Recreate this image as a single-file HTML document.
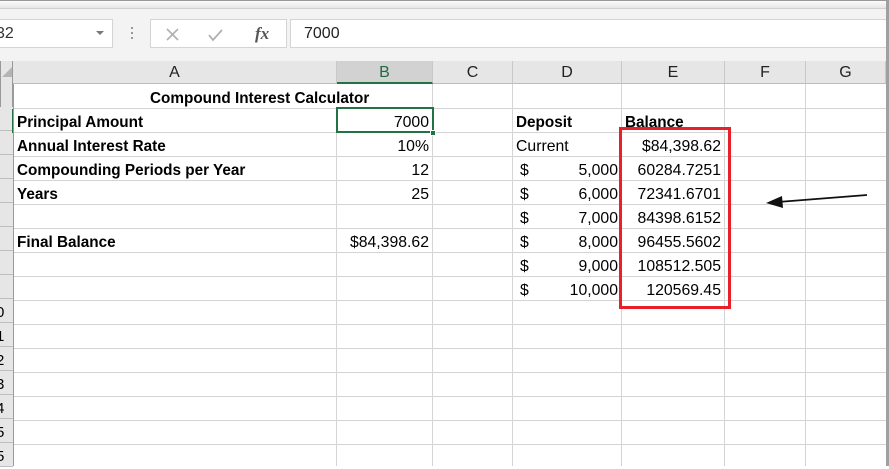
<!DOCTYPE html>
<html><head><meta charset="utf-8"><style>
*{margin:0;padding:0;box-sizing:border-box}
body{width:889px;height:466px;overflow:hidden;background:#fff;position:relative;font-family:"Liberation Sans",Arial,sans-serif;font-size:15.8px;color:#000}
.a{position:absolute}
.t{position:absolute;white-space:nowrap;line-height:25px;height:24px}
.b{font-weight:bold;font-size:15.3px}
.r{text-align:right}
.h{position:absolute;top:61px;height:23px;background:#e6e6e6;border-right:1px solid #c8c8c8;border-bottom:1px solid #bdbdbd;text-align:center;line-height:24px;font-size:16px;color:#222}
</style></head><body>
<div class="a" style="left:0;top:0;width:889px;height:8px;background:linear-gradient(#fff,#e6e6e6)"></div>
<div class="a" style="left:0;top:0;width:889px;height:1px;background:#999"></div>
<div class="a" style="left:0;top:8px;width:889px;height:53px;background:#f3f3f3;border-top:1px solid #d0d0d0"></div>
<div class="a" style="left:0;top:19px;width:113px;height:29px;background:#fff;border:1px solid #d4d4d4;border-left:none"></div>
<div class="t" style="left:-4px;top:21px;font-size:16px;color:#333">32</div>
<div class="a" style="left:96px;top:31px;width:0;height:0;border-left:4px solid transparent;border-right:4px solid transparent;border-top:4px solid #777"></div>
<div class="a" style="left:131px;top:27px;width:2px;height:2px;background:#999;box-shadow:0 5px #999,0 10px #999"></div>
<div class="a" style="left:150px;top:19px;width:137px;height:29px;background:#fff;border:1px solid #d4d4d4"></div>
<svg class="a" style="left:163px;top:25px" width="120" height="18"><path d="M4 4l11 11M15 4L4 15" stroke="#b0b0b0" stroke-width="1.6" fill="none"/><path d="M46 10l4 5 9-10" stroke="#b0b0b0" stroke-width="1.8" fill="none"/><text x="92" y="14" font-family="Liberation Serif" font-style="italic" font-weight="bold" font-size="17" fill="#555">fx</text></svg>
<div class="a" style="left:290px;top:19px;width:599px;height:29px;background:#fff;border:1px solid #d4d4d4"></div>
<div class="t" style="left:304px;top:21px;font-size:16px;color:#222">7000</div>
<div class="a" style="left:0;top:61px;width:13px;height:405px;background:#e6e6e6;border-right:1px solid #9a9a9a"></div>
<div class="a" style="left:0;top:61px;width:1px;height:405px;background:#999"></div>
<div class="a" style="left:2px;top:67px;width:0;height:0;border-left:10px solid transparent;border-bottom:10px solid #b5b5b5"></div>
<div class="h" style="left:13px;width:324px">A</div>
<div class="h" style="left:337px;width:96px;background:#d2d2d2;color:#1f6b3f;border-bottom:2px solid #217346">B</div>
<div class="h" style="left:433px;width:80px">C</div>
<div class="h" style="left:513px;width:109px">D</div>
<div class="h" style="left:622px;width:103px">E</div>
<div class="h" style="left:725px;width:81px">F</div>
<div class="h" style="left:806px;width:80px">G</div>
<div class="a" style="left:886px;top:0;width:3px;height:466px;background:#a0a0a0"></div>
<svg class="a" style="left:14px;top:84px" width="872" height="382">
<g stroke="#d4d4d4" stroke-width="1">
<path d="M0 24.5H872M0 48.5H872M0 72.5H872M0 96.5H872M0 120.5H872M0 144.5H872M0 168.5H872M0 192.5H872M0 216.5H872M0 240.5H872M0 264.5H872M0 288.5H872M0 312.5H872M0 336.5H872M0 360.5H872"/>
<path d="M322.5 24V382M418.5 0V382M498.5 0V382M607.5 0V382M710.5 0V382M791.5 0V382"/>
</g>
</svg>
<div class="a" style="left:0;top:107px;width:13px;height:360px;background:repeating-linear-gradient(#e6e6e6 0 23px,#bdbdbd 23px 24px)"></div>
<div class="a" style="left:12px;top:109px;width:2px;height:24px;background:#217346"></div>
<div class="t" style="left:-4px;top:300px;font-size:15px">0</div>
<div class="t" style="left:-4px;top:324px;font-size:15px">1</div>
<div class="t" style="left:-4px;top:348px;font-size:15px">2</div>
<div class="t" style="left:-4px;top:372px;font-size:15px">3</div>
<div class="t" style="left:-4px;top:396px;font-size:15px">4</div>
<div class="t" style="left:-4px;top:420px;font-size:15px">5</div>
<div class="t" style="left:-4px;top:444px;font-size:15px">5</div>
<div class="a" style="left:13px;top:84px;width:1px;height:382px;background:#9a9a9a"></div>
<div class="t b" style="left:150px;top:86px">Compound Interest Calculator</div>
<div class="t b" style="left:17px;top:110px">Principal Amount</div>
<div class="t b" style="left:17px;top:134px">Annual Interest Rate</div>
<div class="t b" style="left:17px;top:158px">Compounding Periods per Year</div>
<div class="t b" style="left:17px;top:182px">Years</div>
<div class="t b" style="left:17px;top:230px">Final Balance</div>
<div class="a" style="left:336px;top:107px;width:98px;height:26px;border:2px solid #217346"></div>
<div class="a" style="left:430px;top:130px;width:6px;height:6px;background:#217346;border:1px solid #fff"></div>
<div class="t r" style="left:337px;width:92px;top:110px">7000</div>
<div class="t r" style="left:337px;width:92px;top:134px">10%</div>
<div class="t r" style="left:337px;width:92px;top:158px">12</div>
<div class="t r" style="left:337px;width:92px;top:182px">25</div>
<div class="t r" style="left:337px;width:92px;top:230px">$84,398.62</div>
<div class="t b" style="left:516px;top:110px">Deposit</div>
<div class="t b" style="left:625px;top:110px">Balance</div>
<div class="t" style="left:516px;top:134px">Current</div>
<div class="t" style="left:520px;top:158px">$</div><div class="t r" style="left:540px;width:78px;top:158px">5,000</div>
<div class="t" style="left:520px;top:182px">$</div><div class="t r" style="left:540px;width:78px;top:182px">6,000</div>
<div class="t" style="left:520px;top:206px">$</div><div class="t r" style="left:540px;width:78px;top:206px">7,000</div>
<div class="t" style="left:520px;top:230px">$</div><div class="t r" style="left:540px;width:78px;top:230px">8,000</div>
<div class="t" style="left:520px;top:254px">$</div><div class="t r" style="left:540px;width:78px;top:254px">9,000</div>
<div class="t" style="left:520px;top:278px">$</div><div class="t r" style="left:540px;width:78px;top:278px">10,000</div>
<div class="t r" style="left:622px;width:99px;top:134px">$84,398.62</div>
<div class="t r" style="left:622px;width:99px;top:158px">60284.7251</div>
<div class="t r" style="left:622px;width:99px;top:182px">72341.6701</div>
<div class="t r" style="left:622px;width:99px;top:206px">84398.6152</div>
<div class="t r" style="left:622px;width:99px;top:230px">96455.5602</div>
<div class="t r" style="left:622px;width:99px;top:254px">108512.505</div>
<div class="t r" style="left:622px;width:99px;top:278px">120569.45</div>
<div class="a" style="left:619px;top:127px;width:112px;height:182px;border:3px solid #e8202a"></div>
<svg class="a" style="left:760px;top:185px" width="115" height="30"><path d="M107 10L18 17" stroke="#111" stroke-width="1.8"/><path d="M6 18L22 11L23 23Z" fill="#111"/></svg>
</body></html>
